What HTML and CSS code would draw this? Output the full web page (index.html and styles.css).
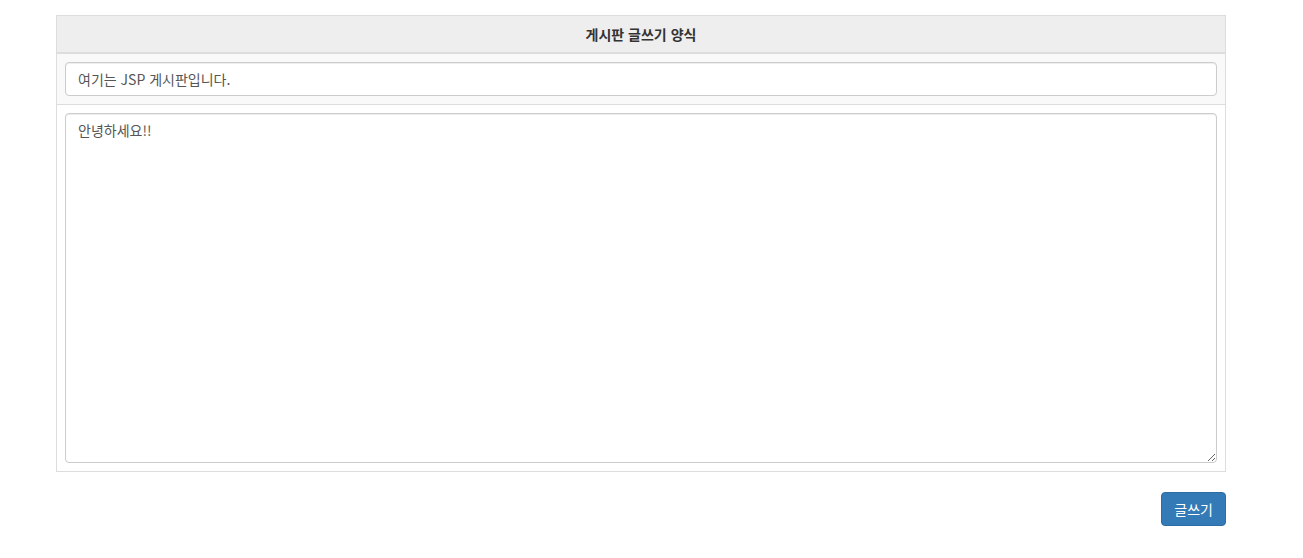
FILE: index.html
```html
<!DOCTYPE html>
<html lang="ko">
<head>
<meta charset="utf-8">
<title>게시판 글쓰기</title>
<link rel="stylesheet" href="styles.css">
</head>
<body>
<div class="container">
  <form class="write-form">
    <table class="board">
      <thead>
        <tr><th>게시판 글쓰기 양식</th></tr>
      </thead>
      <tbody>
        <tr class="odd"><td><input class="form-control" type="text" value="여기는 JSP 게시판입니다."></td></tr>
        <tr><td><textarea class="form-control area">안녕하세요!!</textarea></td></tr>
      </tbody>
    </table>
    <div class="actions">
      <button type="button" class="btn">글쓰기</button>
    </div>
  </form>
</div>
</body>
</html>
```
FILE: styles.css
```css
html, body {
  margin: 0;
  padding: 0;
  background: #fff;
}
body {
  font-family: "Noto Sans CJK KR", "Liberation Sans", sans-serif;
  font-size: 14px;
  line-height: 20px;
  color: #333;
}
.container {
  width: 1170px;
  margin: 15px 0 0 56px;
}
.board {
  width: 100%;
  border-collapse: collapse;
  border-spacing: 0;
  border: 1px solid #ddd;
  margin-bottom: 20px;
}
.board th {
  background: #eeeeee;
  text-align: center;
  font-weight: bold;
  padding: 8px;
  border: 1px solid #ddd;
  border-bottom: 2px solid #ddd;
  line-height: 20px;
}
.board td {
  padding: 8px;
  border: 1px solid #ddd;
  line-height: 20px;
}
.board tr.odd td {
  background: #f9f9f9;
}
.form-control {
  display: block;
  box-sizing: border-box;
  width: 100%;
  height: 34px;
  margin: 0;
  padding: 6px 12px;
  font-family: "Noto Sans CJK KR", "Liberation Sans", sans-serif;
  font-size: 14px;
  line-height: 20px;
  color: #555;
  background: #fff;
  border: 1px solid #ccc;
  border-radius: 4px;
  box-shadow: inset 0 1px 1px rgba(0,0,0,.075);
}
.area {
  height: 350px;
  resize: vertical;
}
.actions {
  display: flex;
  justify-content: flex-end;
}
.btn {
  box-sizing: border-box;
  height: 34px;
  padding: 6px 12px;
  font-family: "Noto Sans CJK KR", "Liberation Sans", sans-serif;
  font-size: 14px;
  line-height: 20px;
  color: #fff;
  background: #337ab7;
  border: 1px solid #2e6da4;
  border-radius: 4px;
  cursor: pointer;
}
```
